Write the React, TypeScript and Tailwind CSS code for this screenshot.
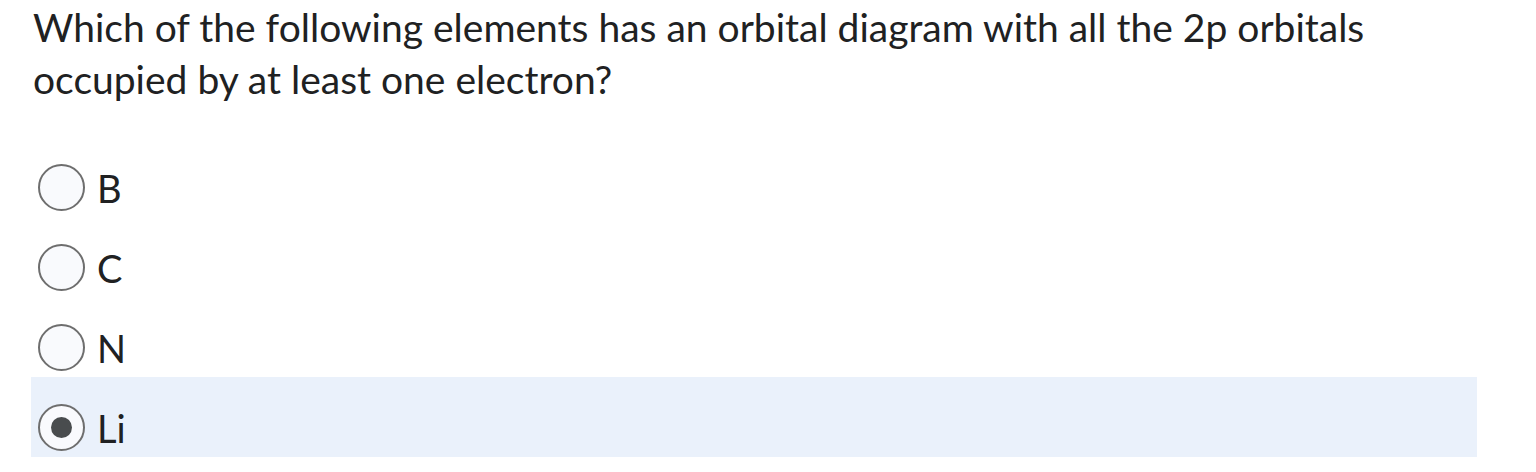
import React, { useState } from 'react';

const options = ['B', 'C', 'N', 'Li'];

const App: React.FC = () => {
  const [selected, setSelected] = useState('Li');

  return (
    <div className="w-[1536px] h-[472px] bg-white pl-[31px] text-[#202122]" style={{ fontFamily: 'Lato, "Noto Sans", sans-serif' }}>
      <p className="pl-[2px] pt-[1px] text-[39px] leading-[52px] w-[1420px]">
        Which of the following elements has an orbital diagram with all the 2p orbitals occupied by at least one electron?
      </p>
      <div className="mt-[32px] w-[1446px]">
        {options.map(opt => {
          const isSel = selected === opt;
          return (
            <label
              key={opt}
              onClick={() => setSelected(opt)}
              className={`flex items-center h-[80px] pl-[7px] pt-[27px] pb-[6px] cursor-pointer ${isSel ? 'bg-[#eaf1fb]' : ''}`}
            >
              <span className="flex items-center justify-center w-[47px] h-[47px] rounded-full border-2 border-[#6e6e6e] bg-[#f9fafd] shrink-0">
                {isSel && <span className="w-[21px] h-[21px] rounded-full bg-[#494c4e]" />}
              </span>
              <span className="ml-[12px] text-[38px] leading-none">{opt}</span>
            </label>
          );
        })}
      </div>
    </div>
  );
};

export default App;
